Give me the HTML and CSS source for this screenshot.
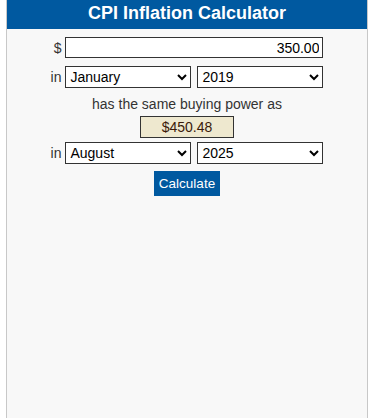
FILE: index.html
```html
<!DOCTYPE html>
<html>
<head>
<meta charset="utf-8">
<link rel="stylesheet" href="styles.css">
</head>
<body>
<div class="calc">
  <div class="calc-title">CPI Inflation Calculator</div>
  <div class="calc-body">
    <div class="grid">
      <span class="lbl">$</span>
      <input class="amount" type="text" value="350.00">
      <span class="lbl">in</span>
      <select class="sel"><option>January</option></select>
      <select class="sel"><option>2019</option></select>
    </div>
    <div class="same">has the same buying power as</div>
    <div class="result">$450.48</div>
    <div class="grid">
      <span class="lbl">in</span>
      <select class="sel"><option>August</option></select>
      <select class="sel"><option>2025</option></select>
    </div>
    <button class="btn">Calculate</button>
  </div>
</div>
</body>
</html>
```
FILE: styles.css
```css
html, body { margin: 0; padding: 0; background: #fff; }
body { font-family: "Liberation Sans", Arial, sans-serif; font-size: 14px; color: #333; }
.calc {
  margin: 0 6px;
  height: 418px;
  box-sizing: border-box;
  border-left: 1px solid #c8c8c8;
  border-right: 1px solid #c8c8c8;
  background: #f8f8f8;
}
.calc-title {
  background: #0059a0;
  color: #fff;
  font-weight: bold;
  font-size: 18px;
  text-align: center;
  height: 29px;
  line-height: 27px;
}
.calc-body { display: flex; flex-direction: column; align-items: center; padding-top: 8px; }
.grid {
  display: grid;
  grid-template-columns: auto 126px 126px;
  column-gap: 6px;
  row-gap: 8px;
  align-items: center;
}
.lbl { text-align: right; margin-right: -2px; }
.amount {
  grid-column: 2 / 4;
  height: 21px;
  box-sizing: border-box;
  border: 1px solid #333;
  text-align: right;
  font: 14px "Liberation Sans", Arial, sans-serif;
  color: #000;
  padding: 0 3px;
  margin: 0;
}
.sel {
  height: 22px;
  box-sizing: border-box;
  border: 1px solid #333;
  border-radius: 0;
  background: #fff;
  font: 14px "Liberation Sans", Arial, sans-serif;
  color: #000;
  margin: 0;
}
.same { margin-top: 8px; line-height: 17px; }
.result {
  margin-top: 3px;
  width: 94px;
  height: 22px;
  box-sizing: border-box;
  border: 1px solid #333;
  background: #eee8cf;
  color: #3a1a0a;
  text-align: center;
  line-height: 20px;
  margin-bottom: 4px;
}
.btn {
  margin-top: 7px;
  background: #0059a0;
  color: #fff;
  border: none;
  border-radius: 0;
  font: 13.5px "Liberation Sans", Arial, sans-serif;
  height: 25px;
  padding: 0 5px;
}
```
